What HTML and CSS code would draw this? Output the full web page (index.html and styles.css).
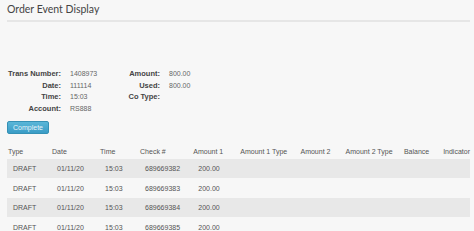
FILE: index.html
```html
<!DOCTYPE html>
<html lang="en">
<head>
    <meta charset="UTF-8">
    <title>Order Event Display</title>
    <link rel="stylesheet" href="styles.css">
</head>
<body>
    <div class="page">
        <h1 class="title">Order Event Display</h1>
        <div class="details">
            <div class="col">
                <div class="label">Trans Number:</div><div class="value">1408973</div>
                <div class="label">Date:</div><div class="value">111114</div>
                <div class="label">Time:</div><div class="value">15:03</div>
                <div class="label">Account:</div><div class="value">RS888</div>
            </div>
            <div class="col">
                <div class="label">Amount:</div><div class="value">800.00</div>
                <div class="label">Used:</div><div class="value">800.00</div>
                <div class="label">Co Type:</div><div class="value"></div>
            </div>
        </div>
        <button class="btn">Complete</button>
        <table class="events">
            <thead>
                <tr>
                    <th class="c-type">Type</th>
                    <th class="c-date">Date</th>
                    <th class="c-time">Time</th>
                    <th class="c-check">Check #</th>
                    <th class="c-amt">Amount 1</th>
                    <th class="c-amt1t">Amount 1 Type</th>
                    <th class="c-amt2">Amount 2</th>
                    <th class="c-amt2t">Amount 2 Type</th>
                    <th class="c-bal">Balance</th>
                    <th class="c-ind">Indicator</th>
                </tr>
            </thead>
            <tbody>
                <tr><td>DRAFT</td><td>01/11/20</td><td>15:03</td><td>689669382</td><td>200.00</td><td></td><td></td><td></td><td></td><td></td></tr>
                <tr><td>DRAFT</td><td>01/11/20</td><td>15:03</td><td>689669383</td><td>200.00</td><td></td><td></td><td></td><td></td><td></td></tr>
                <tr><td>DRAFT</td><td>01/11/20</td><td>15:03</td><td>689669384</td><td>200.00</td><td></td><td></td><td></td><td></td><td></td></tr>
                <tr><td>DRAFT</td><td>01/11/20</td><td>15:03</td><td>689669385</td><td>200.00</td><td></td><td></td><td></td><td></td><td></td></tr>
            </tbody>
        </table>
    </div>
</body>
</html>
```

FILE: styles.css
```css
html, body {
    margin: 0;
    background: #f7f7f7;
    overflow: hidden;
}
.page {
    padding: 0 4px 0 7px;
    font-family: "Liberation Sans", Arial, sans-serif;
    color: #555;
}
.title {
    margin: 0;
    padding: 2px 0 3px;
    font-family: Lato, "Open Sans", sans-serif;
    font-size: 10.5px;
    font-weight: normal;
    color: #444;
    border-bottom: 2px solid #e6e6e6;
    line-height: 15px;
}
.details {
    display: flex;
    align-items: flex-start;
    margin-top: 46px;
    padding-left: 1px;
}
.col {
    display: grid;
    grid-template-columns: 53px 60px;
    column-gap: 9px;
}
.col + .col {
    grid-template-columns: 36px 60px;
    margin-left: -6px;
}
.label {
    text-align: right;
    white-space: nowrap;
    font-family: "Liberation Sans", sans-serif;
    font-weight: bold;
    font-size: 7.5px;
    color: #444;
    line-height: 11.7px;
}
.value {
    font-size: 7px;
    color: #666;
    line-height: 11.7px;
}
.btn {
    display: block;
    margin-top: 6px;
    width: 42px;
    height: 13px;
    padding: 0;
    border: 1px solid #3591b5;
    border-radius: 2px;
    background: linear-gradient(#5ab6d8, #3a9cc6);
    color: #e8f4fa;
    font-family: "Liberation Sans", sans-serif;
    font-size: 7px;
}
.events {
    width: 463px;
    margin-top: 13px;
    border-collapse: collapse;
    font-size: 7px;
    color: #555;
}
.events th {
    text-align: left;
    font-weight: normal;
    white-space: nowrap;
    padding: 0 0 3px 1px;
    height: 9px;
}
.events td {
    height: 19.5px;
    padding: 0 0 0 6px;
}
.events tbody tr:nth-child(odd) {
    background: #e8e8e8;
}
.c-type { width: 44px; }
.c-date { width: 48px; }
.c-time { width: 40px; }
.c-check { width: 53px; }
.c-amt { width: 47px; }
.c-amt1t { width: 60px; }
.c-amt2 { width: 45px; }
.c-amt2t { width: 58px; }
.c-bal { width: 39px; }
```
